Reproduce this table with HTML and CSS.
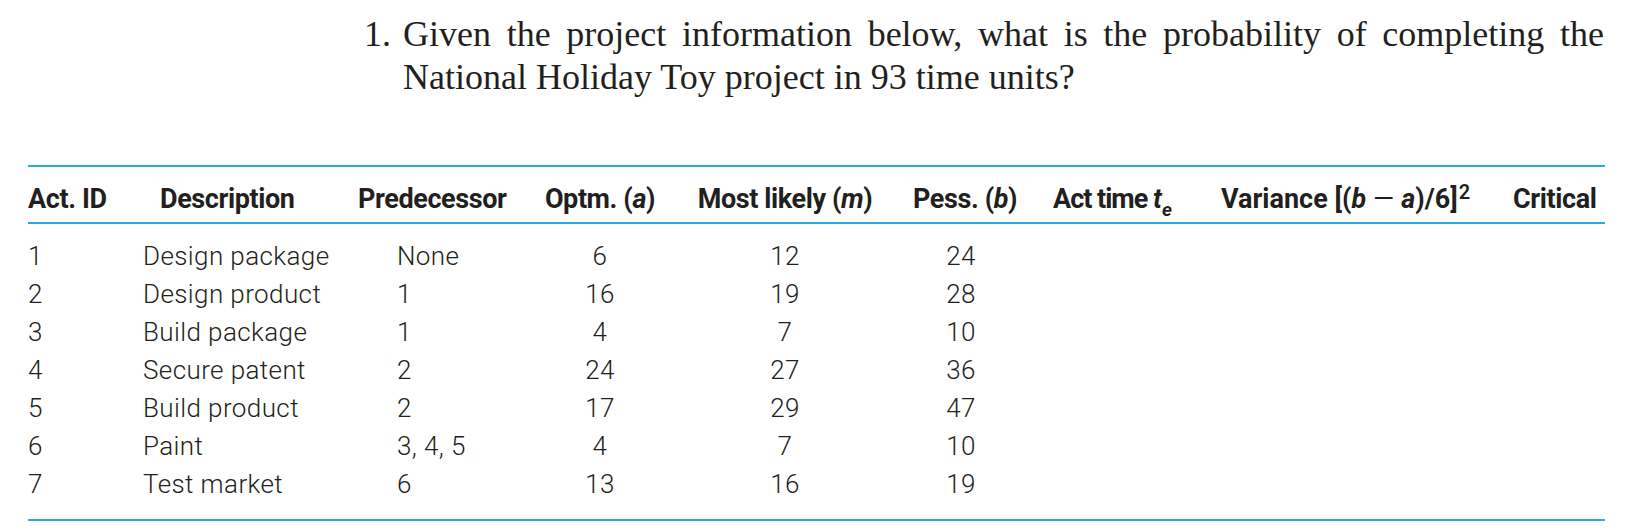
FILE: index.html
```html
<!DOCTYPE html>
<html lang="en">
<head>
<meta charset="utf-8">
<title>Project probability</title>
<link rel="stylesheet" href="styles.css">
</head>
<body>
<div class="question">
  <div class="qnum">1.</div>
  <p class="qtext">Given the project information below, what is the probability of completing the National Holiday Toy project in 93 time units?</p>
</div>
<div class="tbl">
  <div class="row head">
    <div class="c c1">Act. ID</div>
    <div class="c c2">Description</div>
    <div class="c c3">Predecessor</div>
    <div class="c c4">Optm. (<i>a</i>)</div>
    <div class="c c5">Most likely (<i>m</i>)</div>
    <div class="c c6">Pess. (<i>b</i>)</div>
    <div class="c c7">Act time <i>t</i><sub><i>e</i></sub></div>
    <div class="c c8">Variance [(<i>b</i><span class="dash">—</span><i>a</i>)/6]<sup>2</sup></div>
    <div class="c c9">Critical</div>
  </div>
  <div class="body">
    <div class="row"><div class="c c1">1</div><div class="c c2">Design package</div><div class="c c3">None</div><div class="c c4">6</div><div class="c c5">12</div><div class="c c6">24</div><div class="c c7"></div><div class="c c8"></div><div class="c c9"></div></div>
    <div class="row"><div class="c c1">2</div><div class="c c2">Design product</div><div class="c c3">1</div><div class="c c4">16</div><div class="c c5">19</div><div class="c c6">28</div><div class="c c7"></div><div class="c c8"></div><div class="c c9"></div></div>
    <div class="row"><div class="c c1">3</div><div class="c c2">Build package</div><div class="c c3">1</div><div class="c c4">4</div><div class="c c5">7</div><div class="c c6">10</div><div class="c c7"></div><div class="c c8"></div><div class="c c9"></div></div>
    <div class="row"><div class="c c1">4</div><div class="c c2">Secure patent</div><div class="c c3">2</div><div class="c c4">24</div><div class="c c5">27</div><div class="c c6">36</div><div class="c c7"></div><div class="c c8"></div><div class="c c9"></div></div>
    <div class="row"><div class="c c1">5</div><div class="c c2">Build product</div><div class="c c3">2</div><div class="c c4">17</div><div class="c c5">29</div><div class="c c6">47</div><div class="c c7"></div><div class="c c8"></div><div class="c c9"></div></div>
    <div class="row"><div class="c c1">6</div><div class="c c2">Paint</div><div class="c c3">3, 4, 5</div><div class="c c4">4</div><div class="c c5">7</div><div class="c c6">10</div><div class="c c7"></div><div class="c c8"></div><div class="c c9"></div></div>
    <div class="row"><div class="c c1">7</div><div class="c c2">Test market</div><div class="c c3">6</div><div class="c c4">13</div><div class="c c5">16</div><div class="c c6">19</div><div class="c c7"></div><div class="c c8"></div><div class="c c9"></div></div>
  </div>
</div>
</body>
</html>
```
FILE: styles.css
```css
html, body {
  margin: 0;
  padding: 0;
  background: #ffffff;
  color: #231f20;
}

.question {
  display: flex;
  padding-left: 364px;
  padding-top: 13px;
  font-family: "Liberation Serif", "Times New Roman", serif;
  font-size: 36px;
  line-height: 43px;
}

.qnum {
  width: 39px;
  flex: none;
}

.qtext {
  margin: 0;
  width: 1201px;
  text-align: justify;
  text-align-last: left;
}

.tbl {
  margin-left: 28px;
  margin-top: 66px;
  width: 1577px;
  border-top: 2px solid #2aaae2;
  border-bottom: 2px solid #2aaae2;
  font-family: Roboto, "Liberation Sans", sans-serif;
}

.row {
  display: grid;
  grid-template-columns: 115px 215px 177px 130px 240px 112px 183px 300px 105px;
}

.head {
  font-weight: 700;
  font-size: 27px;
  line-height: 40px;
  letter-spacing: -0.4px;
  padding-top: 12px;
  padding-bottom: 3px;
  border-bottom: 2px solid #2aaae2;
  white-space: nowrap;
}

.head .c2 { padding-left: 17px; }
.head .c4, .head .c5, .head .c6 { text-align: center; }
.head .c6 { padding-left: 8px; }
.head .c7 { padding-left: 36px; letter-spacing: -1px; }
.head .c8 { padding-left: 21px; letter-spacing: 0; }
.head .c9 { padding-left: 13px; }

.dash {
  margin: 0 7px;
  font-weight: 400;
}

.head sub {
  font-size: 19px;
  vertical-align: -8px;
  line-height: 0;
  margin-left: 1px;
}

.head sup {
  font-size: 20px;
  vertical-align: 9px;
  line-height: 0;
  margin-left: 1px;
  font-weight: 600;
}

.body {
  padding-top: 13px;
  padding-bottom: 16px;
  font-size: 26px;
  font-weight: 300;
  letter-spacing: 0.4px;
  line-height: 38px;
}

.body .c3 { padding-left: 39px; }
.body .c4, .body .c5, .body .c6 { text-align: center; }
```
